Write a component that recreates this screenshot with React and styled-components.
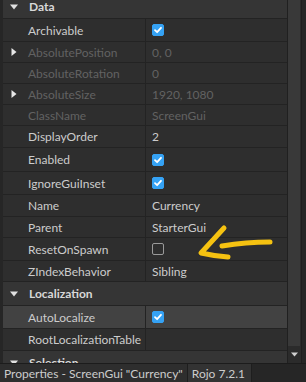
import React from "react";
import styled, { createGlobalStyle } from "styled-components";

const Global = createGlobalStyle`
  html, body { margin: 0; padding: 0; background: #2e2e2e; }
  * { box-sizing: border-box; }
`;

const Root = styled.div`
  position: relative;
  width: 306px;
  height: 382px;
  display: flex;
  flex-direction: column;
  overflow: hidden;
  font-family: Lato, "Noto Sans", sans-serif;
  font-size: 12px;
  background: #2e2e2e;
`;

const Panel = styled.div`
  height: 364px;
  display: flex;
  border-bottom: 1px solid #1c1c1c;
`;

const List = styled.div`
  flex: 1;
  overflow: hidden;
  border-left: 3px solid #262626;
  border-right: 1px solid #202020;
`;

const Inner = styled.div`
  margin-top: -5px;
  display: flex;
  flex-direction: column;
`;

const Header = styled.div`
  height: 24px;
  flex: none;
  display: flex;
  align-items: center;
  padding-left: 7px;
  background: #353535;
  border-bottom: 1px solid #232323;
  color: #d8d8d8;
  font-weight: 700;
`;

const Slot = styled.span`
  width: ${(p) => p.$w}px;
  flex: none;
  display: flex;
  align-items: center;
`;

const Row = styled.div`
  height: ${(p) => p.$h}px;
  flex: none;
  display: flex;
  background: ${(p) => (p.$hl ? "#424242" : "#2e2e2e")};
  border-bottom: 1px solid #232323;
`;

const NameCell = styled.div`
  width: 143px;
  flex: none;
  display: flex;
  align-items: center;
  padding-left: 8px;
  border-right: 1px solid #232323;
  color: ${(p) => (p.$dim ? "#626262" : "#cccccc")};
  white-space: nowrap;
`;

const ValueCell = styled.div`
  flex: 1;
  display: flex;
  align-items: center;
  padding-left: 6px;
  color: ${(p) => (p.$dim ? "#626262" : "#cccccc")};
  white-space: nowrap;
`;

const Check = styled.span`
  width: 12px;
  height: 12px;
  border-radius: 2px;
  display: flex;
  align-items: center;
  justify-content: center;
  background: ${(p) => (p.$on ? "#35a2f4" : "transparent")};
  border: 1px solid ${(p) => (p.$on ? "#35a2f4" : "#9a9a9a")};
`;

const Scroll = styled.div`
  width: 13px;
  flex: none;
  display: flex;
  flex-direction: column;
  background: #2b2b2b;
`;

const Thumb = styled.div`
  flex: 1;
  margin: 0 1px 3px 0;
  background: #393939;
`;

const ArrowBtn = styled.div`
  height: 14px;
  display: flex;
  align-items: flex-start;
  justify-content: center;
  padding-top: 3px;
`;

const Edge = styled.div`
  width: 5px;
  flex: none;
  background: #262626;
  border-left: 1px solid #1e1e1e;
`;

const TabBar = styled.div`
  flex: 1;
  display: flex;
  background: #262626;
`;

const Tab = styled.div`
  display: flex;
  align-items: center;
  padding: 0 ${(p) => p.$pr}px 0 ${(p) => p.$pl}px;
  color: #cccccc;
  background: ${(p) => p.$bg};
  border-right: 1px solid #1e1e1e;
  white-space: nowrap;
  font-size: 12px;
`;

const Overlay = styled.svg`
  position: absolute;
  left: 0;
  top: 0;
  pointer-events: none;
`;

const TriDown = () => (
  <svg width="8" height="6" viewBox="0 0 8 6">
    <path d="M0 0.5 L8 0.5 L4 5.5 Z" fill="#e0e0e0" />
  </svg>
);

const TriRight = () => (
  <svg width="6" height="8" viewBox="0 0 6 8">
    <path d="M0.5 0 L5.5 4 L0.5 8 Z" fill="#e6e6e6" />
  </svg>
);

const Tick = () => (
  <svg width="10" height="10" viewBox="0 0 10 10">
    <path d="M2 5.2 L4.1 7.2 L8 2.8" stroke="#fff" strokeWidth="1.8" fill="none" strokeLinecap="round" strokeLinejoin="round" />
  </svg>
);

const rows = [
  { h: 23, name: "Archivable", check: true },
  { h: 21, name: "AbsolutePosition", value: "0, 0", dim: true, exp: true },
  { h: 21, name: "AbsoluteRotation", value: "0", dim: true },
  { h: 21, name: "AbsoluteSize", value: "1920, 1080", dim: true, exp: true },
  { h: 21, name: "ClassName", value: "ScreenGui", dim: true },
  { h: 22, name: "DisplayOrder", value: "2" },
  { h: 24, name: "Enabled", check: true },
  { h: 23, name: "IgnoreGuiInset", check: true },
  { h: 22, name: "Name", value: "Currency" },
  { h: 21, name: "Parent", value: "StarterGui" },
  { h: 23, name: "ResetOnSpawn", check: false },
  { h: 21, name: "ZIndexBehavior", value: "Sibling" },
];

const rows2 = [
  { h: 23, name: "AutoLocalize", check: true, hl: true },
  { h: 22, name: "RootLocalizationTable", value: "" },
];

function Prop({ r }) {
  return (
    <Row $h={r.h} $hl={r.hl}>
      <NameCell $dim={r.dim}>
        <Slot $w={17}>{r.exp && <TriRight />}</Slot>
        {r.name}
      </NameCell>
      <ValueCell $dim={r.dim}>
        {r.check !== undefined ? (
          <Check $on={r.check}>{r.check && <Tick />}</Check>
        ) : (
          r.value
        )}
      </ValueCell>
    </Row>
  );
}

function Section({ title }) {
  return (
    <Header>
      <Slot $w={19}>
        <TriDown />
      </Slot>
      {title}
    </Header>
  );
}

export default function App() {
  return (
    <Root>
      <Global />
      <Panel>
        <List>
          <Inner>
            <Section title="Data" />
            {rows.map((r) => (
              <Prop key={r.name} r={r} />
            ))}
            <Section title="Localization" />
            {rows2.map((r) => (
              <Prop key={r.name} r={r} />
            ))}
            <Section title="Selection" />
          </Inner>
        </List>
        <Scroll>
          <Thumb />
          <ArrowBtn>
            <svg width="7" height="5" viewBox="0 0 7 5">
              <path d="M0 0.5 L7 0.5 L3.5 4.5 Z" fill="#d0d0d0" />
            </svg>
          </ArrowBtn>
        </Scroll>
        <Edge />
      </Panel>
      <TabBar>
        <Tab $pl={4} $pr={4} $bg="#2e2e2e">
          Properties - ScreenGui "Currency"
        </Tab>
        <Tab $pl={4} $pr={6} $bg="#333333">
          Rojo 7.2.1
        </Tab>
      </TabBar>
      <Overlay width="306" height="382" viewBox="0 0 306 382">
        <path
          d="M224 228 Q213 240 201 253 Q214 256 228 257"
          stroke="#f5c211"
          strokeWidth="5"
          fill="none"
          strokeLinecap="round"
          strokeLinejoin="round"
        />
        <path
          d="M222 246 Q246 242 270 242"
          stroke="#f5c211"
          strokeWidth="5"
          fill="none"
          strokeLinecap="round"
        />
      </Overlay>
    </Root>
  );
}
